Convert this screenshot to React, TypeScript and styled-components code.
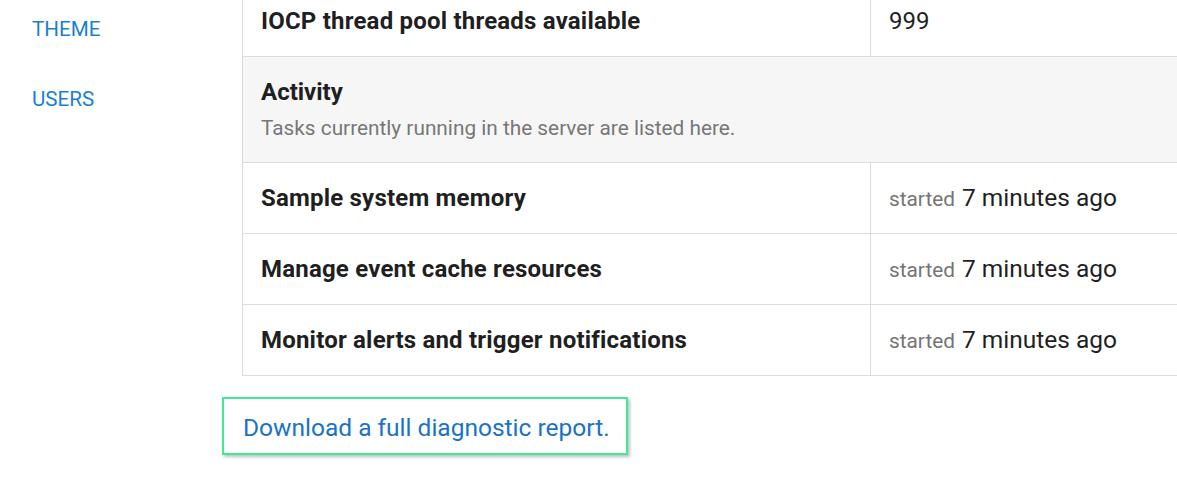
import React from 'react'
import styled, { createGlobalStyle } from 'styled-components'

const GlobalStyle = createGlobalStyle`
  html, body {
    margin: 0;
    padding: 0;
    background: #ffffff;
    overflow: hidden;
  }
  body {
    font-family: Roboto, 'Noto Sans', Arial, sans-serif;
    color: #212121;
  }
`

const Page = styled.div`
  display: flex;
  width: 1177px;
  height: 485px;
  overflow: hidden;
`

const Sidebar = styled.nav`
  width: 242px;
  flex-shrink: 0;
  display: flex;
  flex-direction: column;
  padding-top: 17px;
  gap: 45px;
`

const NavLink = styled.a`
  padding-left: 32px;
  font-size: 20.6px;
  line-height: 25px;
  color: #1a7fd1;
  text-decoration: none;
`

const Main = styled.main`
  margin-top: -14px;
  width: 1000px;
  flex-shrink: 0;
`

const Table = styled.div`
  border-left: 1px solid #dcdcdc;
  display: grid;
  grid-template-columns: 628px 1fr;
`

const Cell = styled.div<{ $bold?: boolean }>`
  height: 70px;
  border-bottom: 1px solid #dcdcdc;
  border-right: 1px solid #dcdcdc;
  display: flex;
  align-items: center;
  padding-left: 18px;
  font-size: 24px;
  font-weight: ${p => (p.$bold ? 700 : 400)};
  letter-spacing: ${p => (p.$bold ? '0.2px' : '0')};
  color: #1f1f1f;
`

const Section = styled.div`
  grid-column: 1 / span 2;
  background: #f6f6f6;
  border-bottom: 1px solid #dcdcdc;
  padding: 21px 18px 22px;
`

const SectionTitle = styled.div`
  font-size: 24px;
  font-weight: 700;
  line-height: 28px;
  color: #1f1f1f;
`

const SectionNote = styled.div`
  margin-top: 10px;
  font-size: 20.8px;
  line-height: 24px;
  color: #777777;
`

const Started = styled.span`
  line-height: 28px;
`

const Muted = styled.span`
  font-size: 20.8px;
  color: #757575;
  margin-right: 7px;
`

const Time = styled.span`
  font-size: 24.5px;
  color: #1f1f1f;
`

const Footer = styled.div`
  padding-top: 21px;
  margin-left: -20px;
`

const ReportLink = styled.a`
  display: inline-block;
  padding: 16px 16px 13px 19px;
  border: 2px solid #40e898;
  box-shadow: 2px 2px 3px rgba(0, 0, 0, 0.25);
  font-size: 24.5px;
  line-height: 25px;
  color: #1a72c8;
  text-decoration: none;
`

const tasks = [
  'Sample system memory',
  'Manage event cache resources',
  'Monitor alerts and trigger notifications',
]

export default function App() {
  return (
    <>
      <GlobalStyle />
      <Page>
        <Sidebar>
          <NavLink href="#">THEME</NavLink>
          <NavLink href="#">USERS</NavLink>
        </Sidebar>
        <Main>
          <Table>
            <Cell $bold>IOCP thread pool threads available</Cell>
            <Cell>999</Cell>
            <Section>
              <SectionTitle>Activity</SectionTitle>
              <SectionNote>Tasks currently running in the server are listed here.</SectionNote>
            </Section>
            {tasks.map(t => (
              <React.Fragment key={t}>
                <Cell $bold>{t}</Cell>
                <Cell>
                  <Started>
                    <Muted>started</Muted>
                    <Time>7 minutes ago</Time>
                  </Started>
                </Cell>
              </React.Fragment>
            ))}
          </Table>
          <Footer>
            <ReportLink href="#">Download a full diagnostic report.</ReportLink>
          </Footer>
        </Main>
      </Page>
    </>
  )
}
